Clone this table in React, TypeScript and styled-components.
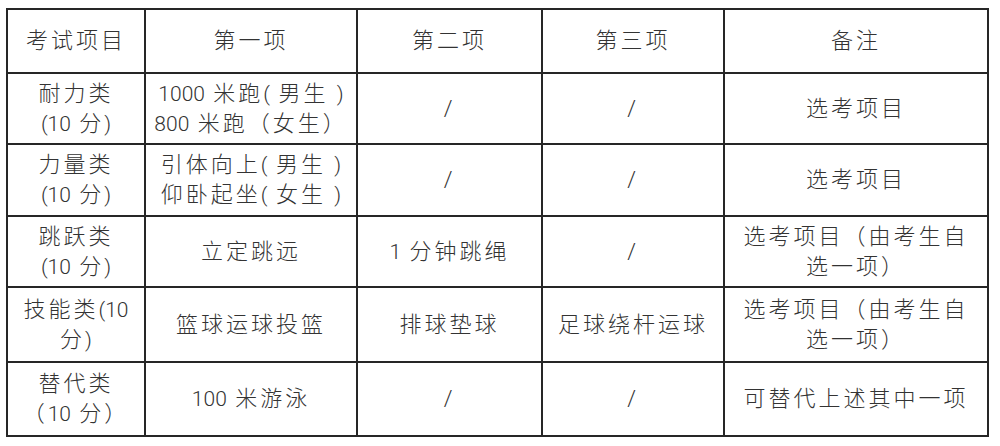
import React from 'react';
import styled, { createGlobalStyle } from 'styled-components';

const GlobalStyle = createGlobalStyle`
  html, body {
    margin: 0;
    padding: 0;
    background: #ffffff;
  }
  body {
    font-family: Roboto, "Noto Sans CJK SC", sans-serif;
    font-weight: 300;
    color: #333333;
  }
`;

const Page = styled.div`
  padding: 8px 0 0 6px;
`;

const Table = styled.table`
  border-collapse: collapse;
  table-layout: fixed;
  width: 983px;
`;

const Col = styled.col<{ $w: number }>`
  width: ${(p) => p.$w}px;
`;

const Row = styled.tr<{ $h: number }>`
  height: ${(p) => p.$h}px;
`;

const Cell = styled.td`
  box-sizing: border-box;
  border: 2px solid #262626;
  padding: 0;
  text-align: center;
  vertical-align: middle;
  font-size: 22px;
  line-height: 30px;
  letter-spacing: 3px;
  white-space: pre;
  overflow: hidden;
`;

const Head = styled(Cell).attrs({ as: 'th' })`
  font-weight: 300;
`;

// latin runs (digits, half-width brackets) sit tighter than the CJK text
const Num = styled.span`
  font-family: Roboto, sans-serif;
  font-size: 21px;
  letter-spacing: 0;
`;

type RowData = { h: number; cells: React.ReactNode[] };

const widths = [138, 212, 185, 182, 264];

const rows: RowData[] = [
  {
    h: 71,
    cells: [
      <>耐力类<br /><Num>(10</Num> 分<Num>)</Num></>,
      <><Num>1000</Num> 米跑<Num>(</Num> 男生 <Num>)</Num><br /><Num>800</Num> 米跑（女生）</>,
      '/',
      '/',
      '选考项目',
    ],
  },
  {
    h: 72,
    cells: [
      <>力量类<br /><Num>(10</Num> 分<Num>)</Num></>,
      <>引体向上<Num>(</Num> 男生 <Num>)</Num><br />仰卧起坐<Num>(</Num> 女生 <Num>)</Num></>,
      '/',
      '/',
      '选考项目',
    ],
  },
  {
    h: 71,
    cells: [
      <>跳跃类<br /><Num>(10</Num> 分<Num>)</Num></>,
      '立定跳远',
      <><Num>1</Num> 分钟跳绳</>,
      '/',
      <>选考项目（由考生自<br />选一项）</>,
    ],
  },
  {
    h: 75,
    cells: [
      <>技能类<Num>(10</Num><br />分<Num>)</Num></>,
      '篮球运球投篮',
      '排球垫球',
      '足球绕杆运球',
      <>选考项目（由考生自<br />选一项）</>,
    ],
  },
  {
    h: 74,
    cells: [
      <>替代类<br />（<Num>10</Num> 分）</>,
      <><Num>100</Num> 米游泳</>,
      '/',
      '/',
      '可替代上述其中一项',
    ],
  },
];

const headers = ['考试项目', '第一项', '第二项', '第三项', '备注'];

export default function App() {
  return (
    <Page>
      <GlobalStyle />
      <Table>
        <colgroup>
          {widths.map((w, i) => (
            <Col key={i} $w={w} />
          ))}
        </colgroup>
        <thead>
          <Row $h={64}>
            {headers.map((t) => (
              <Head key={t}>{t}</Head>
            ))}
          </Row>
        </thead>
        <tbody>
          {rows.map((r, ri) => (
            <Row key={ri} $h={r.h}>
              {r.cells.map((c, ci) => (
                <Cell key={ci}>{c}</Cell>
              ))}
            </Row>
          ))}
        </tbody>
      </Table>
    </Page>
  );
}
